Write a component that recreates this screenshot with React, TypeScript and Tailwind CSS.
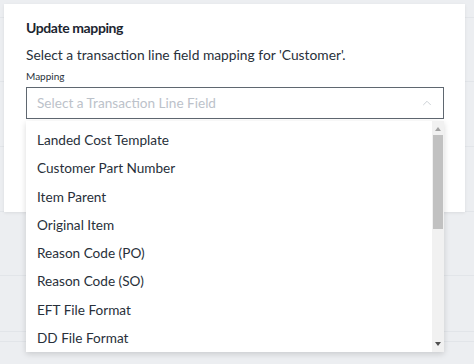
import { ChevronUp } from "lucide-react";

const options = [
  "Landed Cost Template",
  "Customer Part Number",
  "Item Parent",
  "Original Item",
  "Reason Code (PO)",
  "Reason Code (SO)",
  "EFT File Format",
  "DD File Format",
];

function Scrollbar() {
  return (
    <div className="w-[12px] flex flex-col bg-[#f1f1f1] py-[2px]">
      <div className="h-[12px] flex items-center justify-center">
        <div className="w-0 h-0 border-l-[3px] border-r-[3px] border-b-[4px] border-l-transparent border-r-transparent border-b-[#a3a3a3]" />
      </div>
      <div className="h-[94px] mx-[1px] bg-[#c1c1c1]" />
      <div className="flex-1" />
      <div className="h-[12px] flex items-center justify-center">
        <div className="w-0 h-0 border-l-[3px] border-r-[3px] border-t-[4px] border-l-transparent border-r-transparent border-t-[#505050]" />
      </div>
    </div>
  );
}

export default function App() {
  return (
    <div
      className="relative w-[474px] h-[364px] overflow-hidden bg-[#eceef1]"
      style={{ fontFamily: "Lato, 'Noto Sans', sans-serif" }}
    >
      {/* page behind the overlay */}
      <div className="flex flex-col">
        <div className="h-[18px] border-b border-[#e2e5e9]" />
        <div className="h-[64px] border-b border-[#e2e5e9]" />
        <div className="h-[65px] border-b border-[#e2e5e9]" />
        <div className="h-[65px] border-b border-[#e2e5e9]" />
        <div className="h-[64px] border-b border-[#e2e5e9]" />
        <div className="h-[56px] border-b border-[#e2e5e9]" />
        <div className="h-[10px] border-b border-[#e2e5e9]" />
      </div>

      {/* modal */}
      <div className="absolute left-[4px] top-[4px] w-[461px] h-[208px] bg-white shadow-[0_1px_3px_rgba(0,0,0,0.08)]">
        <div className="pl-[22px] pr-[21px] pt-[14px]">
          <h2 className="text-[14px] leading-[20px] font-bold tracking-[-0.4px] text-[#1c2530]">Update mapping</h2>
          <p className="mt-[7px] text-[13.8px] leading-[20px] text-[#29313b]">
            Select a transaction line field mapping for 'Customer'.
          </p>
          <div className="mt-[5px] text-[10px] leading-[12px] text-[#29313b]">Mapping</div>
          <div className="relative mt-[5px]">
            <div className="h-[32px] border border-[#5f6770] flex items-center justify-between pl-[10px] pr-[9px]">
              <span className="text-[13.6px] text-[#bcc2ca]">Select a Transaction Line Field</span>
              <ChevronUp className="w-[14px] h-[14px] text-[#c5cad0]" strokeWidth={1.5} />
            </div>
            <div className="absolute left-0 top-[34px] w-[418px] h-[231px] bg-white shadow-[0_2px_6px_rgba(0,0,0,0.15)] flex">
              <ul className="flex-1 pt-[5px]">
                {options.map((o) => (
                  <li key={o} className="h-[28.3px] flex items-center pl-[11px] text-[13.6px] text-[#28303a]">
                    {o}
                  </li>
                ))}
              </ul>
              <Scrollbar />
            </div>
          </div>
        </div>
      </div>
    </div>
  );
}
